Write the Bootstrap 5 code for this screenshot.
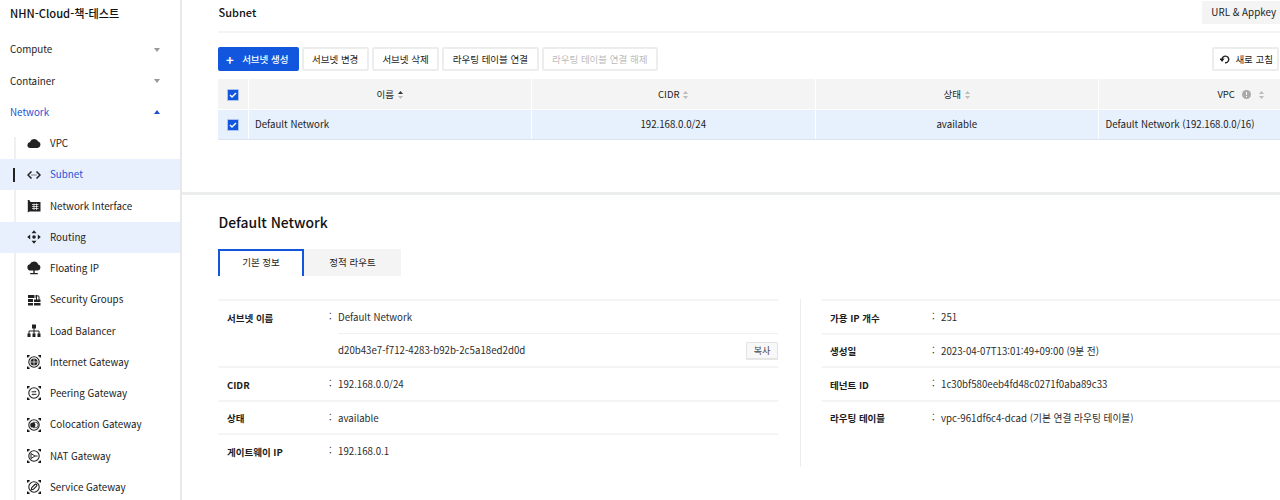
<!DOCTYPE html>
<html lang="ko">
<head>
<meta charset="utf-8">
<link href="https://cdn.jsdelivr.net/npm/bootstrap@5.3.0/dist/css/bootstrap.min.css" rel="stylesheet">
<style>
html,body{height:500px;overflow:hidden}
body{font-family:"Noto Sans CJK KR","Noto Sans",sans-serif;font-size:9.8px;color:#1c1c1c;background:#fff}
.shell{height:500px;overflow:hidden}
.side{width:182px;flex:none;border-right:2px solid #e6e8ec;height:500px;overflow:hidden}
.org{font-size:11.2px;font-weight:500;color:#111;padding:4px 10px 0;height:34px;line-height:18px}
.grp{height:31.25px;padding:0 20px 0 10px;color:#1c1c1c}
.grp.on{color:#1d50d6}
.tri{width:0;height:0;border-left:3.5px solid transparent;border-right:3.5px solid transparent;border-top:4px solid #999}
.tri.up{border-top:0;border-bottom:4px solid #1d50d6}
.subs{margin-left:14px;position:relative}
.subs::before{content:"";position:absolute;left:0;top:9px;bottom:0;width:2px;background:#eef0f3}
.sub{height:31.25px;margin-left:-14px;padding-left:27px;gap:9px;color:#1c1c1c;position:relative}
.sub svg{width:14px;height:14px;flex:none}
.sub.cur{background:#e8f0fd;color:#1d50d6}
.sub.hov{background:#e8f0fd}
.sub.cur::before{content:"";position:absolute;left:13px;top:9px;width:2px;height:14px;background:#222}
.main{flex:1;min-width:0;overflow:hidden}
.top{padding:0 0 0 36px;height:128px}
.ttl{height:33px;border-bottom:2px solid #f3f4f5;font-size:11px;font-weight:500;color:#111;line-height:25px;padding-bottom:8px}
.ttxt{padding-left:.5px}
.uk{background:#f4f4f5;height:23px;line-height:23px;padding:0 4px 0 9px;font-size:9.8px;font-weight:400;margin-top:1px;color:#1c1c1c}
.bar{margin-top:14px;height:24px;gap:3px}
.tb{height:24px;padding:0 8.5px;font-size:9.5px;line-height:20px;border:2px solid #eceded;background:#fff;color:#1c1c1c;border-radius:2px}
.tb.pri{background:#1256de;border-color:#1256de;color:#fff;padding:0 8px 0 6px;width:80.500px;font-weight:500}
.tb .plus{font-size:13px;line-height:1;font-weight:700}
.tb.off:disabled{color:#bbb;background:#fff;opacity:1;border-color:#eceded}
.tb.fresh{padding:0 4px 0 6px;gap:5px;margin-right:1px}
.grid-t{margin-top:8px;width:1164px;margin-bottom:0;table-layout:fixed;--bs-table-bg:transparent;--bs-table-border-color:transparent}
.grid-t th,.grid-t td{height:30px;padding:0 6px;vertical-align:middle;font-size:9.7px;font-weight:400;text-align:center;border-left:1px solid #fff;border-bottom:0;color:#1c1c1c}
.grid-t th{background:#f4f4f4;border-bottom:1px solid #fff;font-size:9.5px}
.grid-t td{background:#e7f0fd;border-bottom:1px solid #dde3ec}
.grid-t .lft{text-align:left;padding-left:6.500px}
.grid-t .ckc{text-align:left;padding-left:9px;border-left:0}
.ck{display:inline-block;width:12px;height:12px;background:#1256de;border-radius:1px;vertical-align:middle;border:1px solid #a9c2f0}
.ck svg{display:block;width:10px;height:10px}
.srt{display:inline-block;width:5px;height:8px;margin-left:4px;vertical-align:-1px}
.sep{height:3px;background:#eceded;margin-top:64px}
.det{padding:0 0 0 36px}
.dname{font-size:13.9px;font-weight:500;color:#111;margin:17px 0 0;line-height:20px;padding-left:.5px}
.tabs{margin-top:17px;height:27px}
.tabx{width:86px;height:27px;border:2px solid #1256de;border-bottom:0;text-align:center;line-height:23px;font-size:9.5px;color:#1c1c1c;background:#fff}
.taby{width:97px;height:27px;background:#f4f4f4;text-align:center;line-height:27px;font-size:9.5px;color:#1c1c1c}
.cols{margin-top:23px;gap:0;height:168px}
.lcol{width:560px;flex:none;padding:0}
.rcol{border-left:1px solid #eceded;margin-left:22px;padding-left:21px;flex:1}
.rw{height:33.5px;border-top:2px solid #f4f4f5;align-items:center;padding-top:2px}
.rw.noline{border-top:1px solid transparent;position:relative}
.rw.noline::before{content:"";position:absolute;left:120px;right:0;top:-1px;height:1px;background:#f0f0f1}
.lab{width:103px;flex:none;padding-left:9px;font-weight:700;color:#1c1c1c;font-size:9.5px}
.colon{width:17px;flex:none;padding:0 0 2px 8px}
.val{font-size:9.7px;color:#2c2c2c}
.cp{height:17px;width:32px;padding:0;font-size:9px;line-height:13px;border:1px solid #e3e3e3;border-radius:1px;background:#f8f8f8;color:#444;box-shadow:0 1px 0 #e6e6e6}
.rl{width:102px;padding-left:8px}
</style>
</head>
<body>
<svg width="0" height="0" class="position-absolute"><defs>
<g id="gw"><path fill="none" stroke="#111" stroke-width="1.500" d="M.7 2.600V.7h1.900M13.300 2.600V.7h-1.900M.7 11.400v1.900h1.900M13.300 11.400v1.900h-1.900"/><circle cx="7" cy="7" r="5.200" fill="none" stroke="#222" stroke-width="1.100"/></g>
</defs></svg>
<div class="shell d-flex">
<nav class="side">
  <div class="org">NHN-Cloud-책-테스트</div>
  <div class="grp d-flex align-items-center justify-content-between">Compute<span class="tri"></span></div>
  <div class="grp d-flex align-items-center justify-content-between">Container<span class="tri"></span></div>
  <div class="grp on d-flex align-items-center justify-content-between">Network<span class="tri up"></span></div>
  <div class="subs">
    <div class="sub d-flex align-items-center"><svg viewBox="0 0 14 14"><path fill="#222" d="M3.500 12A3 3 0 0 1 .4 9 3 3 0 0 1 3 6.100 4.500 4.500 0 0 1 11.300 5.600 3.300 3.300 0 0 1 10.500 12z"/></svg>VPC</div>
    <div class="sub cur d-flex align-items-center"><svg viewBox="0 0 14 14" fill="none" stroke="#222" stroke-width="1.500"><path d="M4.500 3.500 1 7l3.500 3.500M9.500 3.500 13 7l-3.500 3.500"/><path stroke-width="1.100" stroke-dasharray="1.100 .9" d="M4.500 7h5"/></svg>Subnet</div>
    <div class="sub d-flex align-items-center"><svg viewBox="0 0 14 14"><path fill="#222" d="M.8 1h1.500L3.500 3h10v9.500H2.500L.8 13.500z"/><path stroke="#fff" stroke-width=".7" d="M5 5.500h6.500M5 7.500h6.500M5 9.500h6.500M7 4.500v6.500M9.500 4.500v6.500"/></svg>Network Interface</div>
    <div class="sub hov d-flex align-items-center"><svg viewBox="0 0 14 14" fill="#222"><path d="M7 .2 9.500 3.200h-5zM7 13.800 4.500 10.800h5zM.2 7l3-2.500v5zM13.800 7l-3 2.500v-5z"/><circle cx="7" cy="7" r="1.800"/></svg>Routing</div>
    <div class="sub d-flex align-items-center"><svg viewBox="0 0 14 14" fill="#222"><path d="M3.500 9.500A3.200 3.200 0 0 1 2.800 3.200 4.500 4.500 0 0 1 11.200 3.600 3 3 0 0 1 10.700 9.500z"/><path d="M6.300 9h1.400v3H6.300zM3.200 12h7.600v1.200H3.200z"/></svg>Floating IP</div>
    <div class="sub d-flex align-items-center"><svg viewBox="0 0 14 14" fill="#222"><path d="M1 2h6.500v3H1zM8.500 2h1.500v3H8.500zM1 6h5v3H1zM1 10h5v2.500H1zM7 10h6.500v2.500H7zM7 6.500h6.500v2.500H7zM9 6.500V4a1.700 1.700 0 0 1 3.500 0v2.500h-1V4a.7.7 0 0 0-1.500 0v2.500z"/></svg>Security Groups</div>
    <div class="sub d-flex align-items-center"><svg viewBox="0 0 14 14" fill="#222"><path d="M5 .5h4v4H5zM6.500 4.500h1V7h-1zM2 6.500h10v1H2z"/><path d="M1.500 7h1v2.500h-1zM6.500 7h1v2.500h-1zM11.500 7h1v2.500h-1zM.5 9.500h3V13h-3zM5.500 9.500h3V13h-3zM10.500 9.500h3V13h-3z"/></svg>Load Balancer</div>
    <div class="sub d-flex align-items-center"><svg viewBox="0 0 14 14"><use href="#gw"/><circle cx="7" cy="7" r="3.500" fill="#222"/><path stroke="#fff" stroke-width=".7" d="M3.500 7h7M7 3.500v7"/></svg>Internet Gateway</div>
    <div class="sub d-flex align-items-center"><svg viewBox="0 0 14 14"><use href="#gw"/><path fill="none" stroke="#222" d="M4.500 5.800h4.500l-1-1M9.500 8.300H5l1 1"/></svg>Peering Gateway</div>
    <div class="sub d-flex align-items-center"><svg viewBox="0 0 14 14"><use href="#gw"/><circle cx="5.800" cy="7" r="2.600" fill="#222"/><path fill="none" stroke="#222" stroke-width=".8" d="M6 4.300h2.500a2.700 2.700 0 0 1 0 5.400H6"/></svg>Colocation Gateway</div>
    <div class="sub d-flex align-items-center"><svg viewBox="0 0 14 14"><use href="#gw"/><path fill="none" stroke="#222" d="M4 4.500 8 7l-4 2.500zM8 7h2.500"/></svg>NAT Gateway</div>
    <div class="sub d-flex align-items-center"><svg viewBox="0 0 14 14"><use href="#gw"/><path fill="none" stroke="#222" stroke-width="1.100" d="M4.300 9.700l.5-2.200 3-3a1.200 1.200 0 0 1 1.700 1.700l-3 3z"/></svg>Service Gateway</div>
  </div>
</nav>
<main class="main">
  <section class="top">
    <div class="ttl d-flex justify-content-between align-items-start"><span class="ttxt">Subnet</span><span class="uk">URL &amp; Appkey</span></div>
    <div class="bar d-flex align-items-center">
      <button class="btn tb pri d-flex justify-content-between align-items-center"><span class="plus">+</span><span>서브넷 생성</span></button>
      <button class="btn tb">서브넷 변경</button>
      <button class="btn tb">서브넷 삭제</button>
      <button class="btn tb">라우팅 테이블 연결</button>
      <button class="btn tb off" disabled>라우팅 테이블 연결 해제</button>
      <button class="btn tb fresh ms-auto d-flex align-items-center"><svg width="10" height="10" viewBox="0 0 12 12" fill="none" stroke="#222" stroke-width="1.700"><path d="M2.500 6.500A4 4 0 1 1 6 10.500"/><path fill="#222" stroke="none" d="M-.5 5.500h6L2.500 9.500z"/></svg>새로 고침</button>
    </div>
    <table class="table grid-t">
      <colgroup><col style="width:30px"><col style="width:283.5px"><col style="width:283.5px"><col style="width:283.5px"><col></colgroup>
      <thead><tr>
        <th class="ckc"><span class="ck"><svg viewBox="0 0 10 10" fill="none" stroke="#fff" stroke-width="1.500"><path d="M2 5l2 2 4-4"/></svg></span></th>
        <th>이름<svg class="srt" viewBox="0 0 5 8"><path fill="#333" d="M2.500 0 5 3H0z"/><path fill="#bbb" d="M2.500 8 0 5h5z"/></svg></th>
        <th>CIDR<svg class="srt" viewBox="0 0 5 8"><path fill="#bbb" d="M2.500 0 5 3H0zM2.500 8 0 5h5z"/></svg></th>
        <th>상태<svg class="srt" viewBox="0 0 5 8"><path fill="#bbb" d="M2.500 0 5 3H0zM2.500 8 0 5h5z"/></svg></th>
        <th>VPC <svg width="9" height="9" viewBox="0 0 9 9" class="mx-1" style="vertical-align:-1px"><circle cx="4.500" cy="4.500" r="4.500" fill="#aaa"/><path stroke="#fff" d="M4.500 2v3M4.500 6v1"/></svg><svg class="srt" viewBox="0 0 5 8"><path fill="#bbb" d="M2.500 0 5 3H0zM2.500 8 0 5h5z"/></svg></th>
      </tr></thead>
      <tbody><tr>
        <td class="ckc"><span class="ck"><svg viewBox="0 0 10 10" fill="none" stroke="#fff" stroke-width="1.500"><path d="M2 5l2 2 4-4"/></svg></span></td>
        <td class="lft">Default Network</td><td>192.168.0.0/24</td><td>available</td><td class="lft">Default Network (192.168.0.0/16)</td>
      </tr></tbody>
    </table>
  </section>
  <div class="sep"></div>
  <section class="det">
    <h2 class="dname">Default Network</h2>
    <div class="tabs d-flex"><div class="tabx">기본 정보</div><div class="taby">정적 라우트</div></div>
    <div class="cols d-flex">
      <div class="lcol">
        <div class="rw d-flex"><span class="lab">서브넷 이름</span><span class="colon">:</span><span class="val">Default Network</span></div>
        <div class="rw noline d-flex"><span class="lab"></span><span class="colon"></span><span class="val">d20b43e7-f712-4283-b92b-2c5a18ed2d0d</span><button class="btn cp ms-auto">복사</button></div>
        <div class="rw d-flex"><span class="lab">CIDR</span><span class="colon">:</span><span class="val">192.168.0.0/24</span></div>
        <div class="rw d-flex"><span class="lab">상태</span><span class="colon">:</span><span class="val">available</span></div>
        <div class="rw d-flex"><span class="lab">게이트웨이 IP</span><span class="colon">:</span><span class="val">192.168.0.1</span></div>
      </div>
      <div class="rcol">
        <div class="rw d-flex"><span class="lab rl">가용 IP 개수</span><span class="colon">:</span><span class="val">251</span></div>
        <div class="rw d-flex"><span class="lab rl">생성일</span><span class="colon">:</span><span class="val">2023-04-07T13:01:49+09:00 (9분 전)</span></div>
        <div class="rw d-flex"><span class="lab rl">테넌트 ID</span><span class="colon">:</span><span class="val">1c30bf580eeb4fd48c0271f0aba89c33</span></div>
        <div class="rw d-flex"><span class="lab rl">라우팅 테이블</span><span class="colon">:</span><span class="val">vpc-961df6c4-dcad (기본 연결 라우팅 테이블)</span></div>
      </div>
    </div>
  </section>
</main>
</div>
<script src="https://cdn.jsdelivr.net/npm/bootstrap@5.3.0/dist/js/bootstrap.bundle.min.js"></script>
</body>
</html>
